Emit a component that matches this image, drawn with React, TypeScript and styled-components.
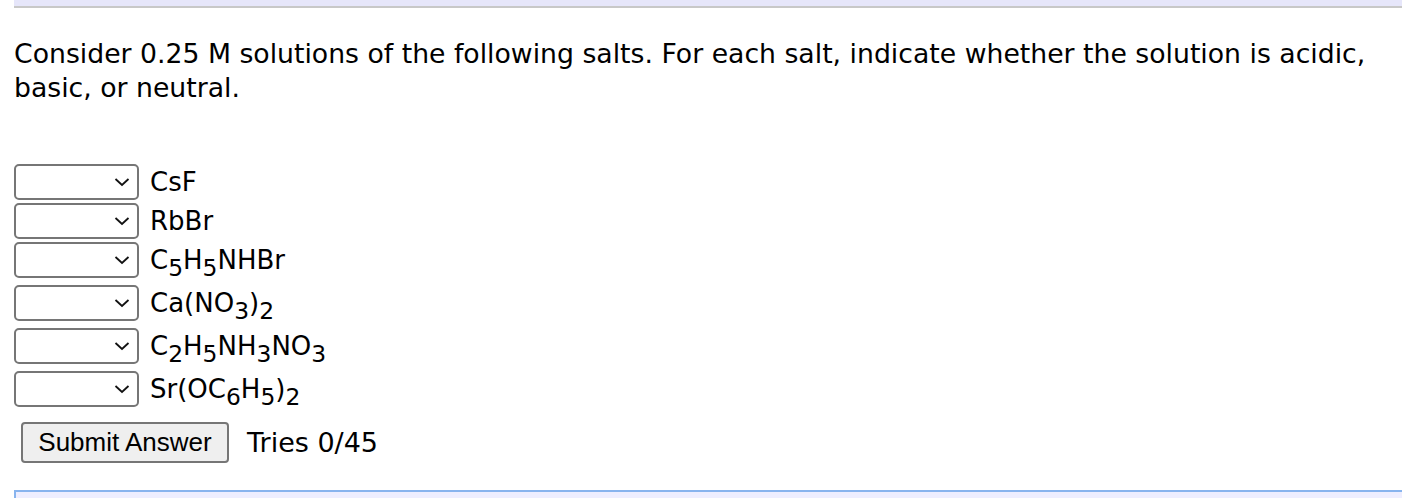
import styled, { createGlobalStyle } from "styled-components";

const GlobalStyle = createGlobalStyle`
  body {
    margin: 0;
    background: #ffffff;
    font-family: "DejaVu Sans", Verdana, sans-serif;
    color: #000000;
  }
`;

type Salt = { id: string; label: React.ReactNode; sub: boolean };

const salts: Salt[] = [
  { id: "csf", label: "CsF", sub: false },
  { id: "rbbr", label: "RbBr", sub: false },
  {
    id: "pyr",
    label: (
      <>
        C<sub>5</sub>H<sub>5</sub>NHBr
      </>
    ),
    sub: true,
  },
  {
    id: "cano3",
    label: (
      <>
        Ca(NO<sub>3</sub>)<sub>2</sub>
      </>
    ),
    sub: true,
  },
  {
    id: "etam",
    label: (
      <>
        C<sub>2</sub>H<sub>5</sub>NH<sub>3</sub>NO<sub>3</sub>
      </>
    ),
    sub: true,
  },
  {
    id: "srph",
    label: (
      <>
        Sr(OC<sub>6</sub>H<sub>5</sub>)<sub>2</sub>
      </>
    ),
    sub: true,
  },
];

export default function App() {
  return (
    <>
      <GlobalStyle />
      <Page>
        <TopBand />
        <Prompt>
          Consider 0.25 M solutions of the following salts. For each salt,
          indicate whether the solution is acidic, basic, or neutral.
        </Prompt>
        <SaltList>
          {salts.map((s) => (
            <SaltRow key={s.id} $sub={s.sub}>
              <SelectBox>
                <svg width="16" height="10" viewBox="0 0 16 10">
                  <path
                    d="M1.5 2 L8 8 L14.5 2"
                    fill="none"
                    stroke="#111111"
                    strokeWidth="1.8"
                  />
                </svg>
              </SelectBox>
              <SaltLabel>{s.label}</SaltLabel>
            </SaltRow>
          ))}
        </SaltList>
        <SubmitRow>
          <SubmitButton type="button">Submit Answer</SubmitButton>
          <Tries>Tries 0/45</Tries>
        </SubmitRow>
        <BottomBand />
      </Page>
    </>
  );
}

const Page = styled.div`
  padding-left: 14px;
`;

const TopBand = styled.div`
  height: 6px;
  background: #e6e6fa;
  border-bottom: 2px solid #c8c8c8;
`;

const Prompt = styled.p`
  margin: 29px 0 0 0;
  font-size: 26.7px;
  line-height: 34px;
`;

const SaltList = styled.div`
  margin-top: 59px;
  display: flex;
  flex-direction: column;
`;

const SaltRow = styled.div<{ $sub: boolean }>`
  display: flex;
  align-items: flex-start;
  margin-bottom: ${({ $sub }) => ($sub ? "7px" : "3px")};
`;

const SelectBox = styled.div`
  box-sizing: border-box;
  width: 125px;
  height: 36px;
  border: 2px solid #767676;
  border-radius: 5px;
  background: #ffffff;
  display: flex;
  align-items: center;
  justify-content: flex-end;
  padding-right: 7px;
  flex-shrink: 0;
`;

const SaltLabel = styled.span`
  margin-left: 11px;
  font-size: 26px;
  line-height: 36px;
  white-space: nowrap;

  sub {
    font-size: 90%;
    line-height: 0;
    vertical-align: -7px;
  }
`;

const SubmitRow = styled.div`
  display: flex;
  align-items: center;
  margin-top: 8px;
  padding-left: 7px;
`;

const SubmitButton = styled.button`
  box-sizing: border-box;
  width: 208px;
  height: 41px;
  padding: 0;
  background: #efefef;
  border: 2px solid #767676;
  border-radius: 4px;
  font-family: "Liberation Sans", Arial, sans-serif;
  font-size: 26px;
  color: #000000;
`;

const Tries = styled.span`
  margin-left: 18px;
  font-size: 27px;
`;

const BottomBand = styled.div`
  margin-top: 27px;
  height: 20px;
  background: #eeeeff;
  border-top: 2px solid #88b4ee;
  border-left: 2px solid #88b4ee;
`;
